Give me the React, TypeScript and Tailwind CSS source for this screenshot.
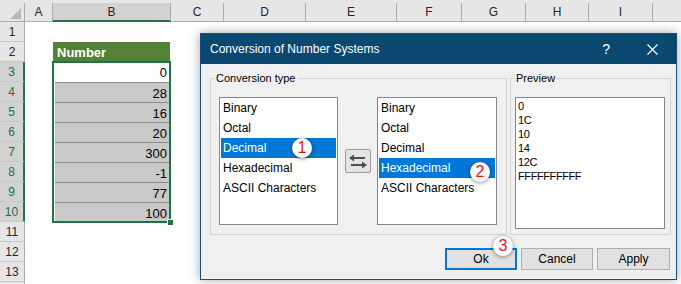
import React from "react";

const cols = [
    { label: "A", w: "w-[28px]" },
    { label: "B", w: "w-[118px]", sel: true },
    { label: "C", w: "w-[53px]" },
    { label: "D", w: "w-[82px]" },
    { label: "E", w: "w-[91px]" },
    { label: "F", w: "w-[65px]" },
    { label: "G", w: "w-[64px]" },
    { label: "H", w: "w-[63px]" },
    { label: "I", w: "w-[64px]" },
];

const values = ["0", "28", "16", "20", "300", "-1", "77", "100"];
const types = ["Binary", "Octal", "Decimal", "Hexadecimal", "ASCII Characters"];
const preview = ["0", "1C", "10", "14", "12C", "FFFFFFFFFF"];

function Badge({ n, pos }: { n: string; pos: string }) {
    return (
        <div
            className={`absolute ${pos} w-[20px] h-[20px] rounded-full bg-white shadow-[0_1px_4px_rgba(0,0,0,0.45)] flex items-center justify-center text-[16px] leading-none text-[#e3161c]`}
        >
            {n}
        </div>
    );
}

function ListBox({ items, selected, width }: { items: string[]; selected: string; width: string }) {
    return (
        <div className={`${width} h-[128px] border border-[#828790] bg-white p-[1px] pt-0`}>
            {items.map((t) => (
                <div
                    key={t}
                    className={`h-[20px] leading-[20px] pl-[2px] text-[12px] ${t === selected ? "bg-[#0078d7] text-white" : "text-black"}`}
                >
                    {t}
                </div>
            ))}
        </div>
    );
}

export default function App() {
    return (
        <div className="relative w-[681px] h-[284px] overflow-hidden bg-white font-['Liberation_Sans',Arial,sans-serif]">
            {/* column headers */}
            <div className="flex h-[22px] bg-[#e6e6e6] pt-[3px]">
                <div className="w-[25px] h-[19px] border-r border-b border-[#ababab] relative">
                    <svg width="25" height="19" viewBox="0 0 25 19" className="absolute left-0 top-0">
                        <polygon points="21,5 21,16 10,16" fill="#b9b9b9" />
                    </svg>
                </div>
                {cols.map((c) => (
                    <div
                        key={c.label}
                        className={`${c.w} h-[19px] flex items-center justify-center text-[12px] border-r border-[#ababab] ${
                            c.sel ? "bg-[#d2d2d2] border-b-2 border-b-[#217346]" : "border-b border-b-[#ababab]"
                        } text-[#262626]`}
                    >
                        {c.label}
                    </div>
                ))}
                <div className="flex-1 h-[19px] border-b border-[#ababab]" />
            </div>

            <div className="flex">
                {/* row headers */}
                <div className="w-[25px] flex flex-col">
                    {Array.from({ length: 14 }, (_, i) => i + 1).map((r) => {
                        const sel = r >= 3 && r <= 10;
                        return (
                            <div
                                key={r}
                                className={`h-[20px] shrink-0 border-b border-[#c8c8c8] text-[12px] leading-[19px] pt-[1px] text-center ${
                                    sel
                                        ? "bg-[#d2d2d2] text-[#1e6e43] border-r-2 border-r-[#217346]"
                                        : "bg-[#e6e6e6] text-[#262626] border-r border-r-[#ababab]"
                                }`}
                            >
                                {r <= 13 ? r : ""}
                            </div>
                        );
                    })}
                </div>

                {/* cells */}
                <div className="flex-1 relative">
                    <div className="ml-[28px] w-[118px] flex flex-col">
                        <div className="h-[20px]" />
                        <div className="h-[19px] w-[117px] bg-[#548235] text-white font-bold text-[13px] leading-[17px] pt-[2px] pl-[4px]">
                            Number
                        </div>
                        <div className="relative -ml-[1px] w-[119px] h-[162px] border-2 border-[#217346] bg-white pl-[1px]">
                            {values.map((v, i) => (
                                <div
                                    key={i}
                                    className={`text-right pr-[2px] text-[13px] text-black ${
                                        i === 0
                                            ? "h-[19px] bg-white leading-[18px] pt-[1px]"
                                            : `${i === values.length - 1 ? "h-[19px]" : "h-[20px]"} bg-[#c9c9c9] border-t border-[#8d8d8d] leading-[17px] pt-[2px]`
                                    }`}
                                >
                                    {v}
                                </div>
                            ))}
                            <div className="absolute -right-[5px] -bottom-[5px] w-[7px] h-[7px] bg-[#217346] border border-white" />
                        </div>
                    </div>
                </div>
            </div>

            {/* dialog */}
            <div className="absolute left-[200px] top-[33px] w-[477px] h-[247px] border border-[#1b4c78] bg-[#f0f0f0] shadow-[0_0_10px_rgba(0,0,0,0.35)] flex flex-col">
                <div className="h-[30px] bg-[#0b4870] flex items-center pl-[9px] text-white text-[12px]">
                    <span className="flex-1">Conversion of Number Systems</span>
                    <span className="text-[14px] mr-[37px]">?</span>
                    <svg width="11" height="11" viewBox="0 0 11 11" className="mr-[18px]">
                        <path d="M0.5 0.5 L10.5 10.5 M10.5 0.5 L0.5 10.5" stroke="white" strokeWidth="1.2" fill="none" />
                    </svg>
                </div>

                <div className="flex mt-[8px] pl-[9px] gap-[3px]">
                    <fieldset className="w-[297px] h-[163px] border border-[#d5d5d5]">
                        <legend className="ml-[3px] px-[2px] text-[11px] leading-[13px] text-black">Conversion type</legend>
                        <div className="flex items-center mt-[12px] pl-[8px]">
                            <ListBox items={types} selected="Decimal" width="w-[119px]" />
                            <button className="ml-[7px] mr-[6px] w-[26px] h-[24px] rounded-[2px] border border-[#9a9a9a] bg-[#e3e3e3] flex items-center justify-center">
                                <svg width="18" height="15" viewBox="0 0 18 15">
                                    <rect x="4" y="3" width="12" height="2" fill="#4d4d4d" />
                                    <polygon points="0,4 5,0.5 5,7.5" fill="#4d4d4d" />
                                    <rect x="2" y="10" width="12" height="2" fill="#4d4d4d" />
                                    <polygon points="18,11 13,7.5 13,14.5" fill="#4d4d4d" />
                                </svg>
                            </button>
                            <ListBox items={types} selected="Hexadecimal" width="w-[120px]" />
                        </div>
                    </fieldset>
                    <fieldset className="w-[161px] h-[163px] border border-[#d5d5d5]">
                        <legend className="ml-[3px] px-[2px] text-[11px] leading-[13px] text-black">Preview</legend>
                        <div className="mt-[12px] ml-[4px] w-[150px] h-[132px] border border-[#828790] bg-white pt-[1px] pl-[2px]">
                            {preview.map((p, i) => (
                                <div key={i} className="h-[14px] leading-[14px] text-[11px] tracking-[-0.4px] text-black">
                                    {p}
                                </div>
                            ))}
                        </div>
                    </fieldset>
                </div>

                <div className="flex justify-end gap-[4px] mt-[13px] pr-[6px]">
                    <button className="w-[72px] h-[22px] border-2 border-[#0078d7] bg-[#e1e1e1] text-[12px] text-black">Ok</button>
                    <button className="w-[72px] h-[22px] border border-[#adadad] bg-[#e1e1e1] text-[12px] text-black">Cancel</button>
                    <button className="w-[73px] h-[22px] border border-[#adadad] bg-[#e1e1e1] text-[12px] text-black">Apply</button>
                </div>
            </div>

            <Badge n="1" pos="left-[292px] top-[138px]" />
            <Badge n="2" pos="left-[470px] top-[162px]" />
            <Badge n="3" pos="left-[493px] top-[236px]" />
        </div>
    );
}
